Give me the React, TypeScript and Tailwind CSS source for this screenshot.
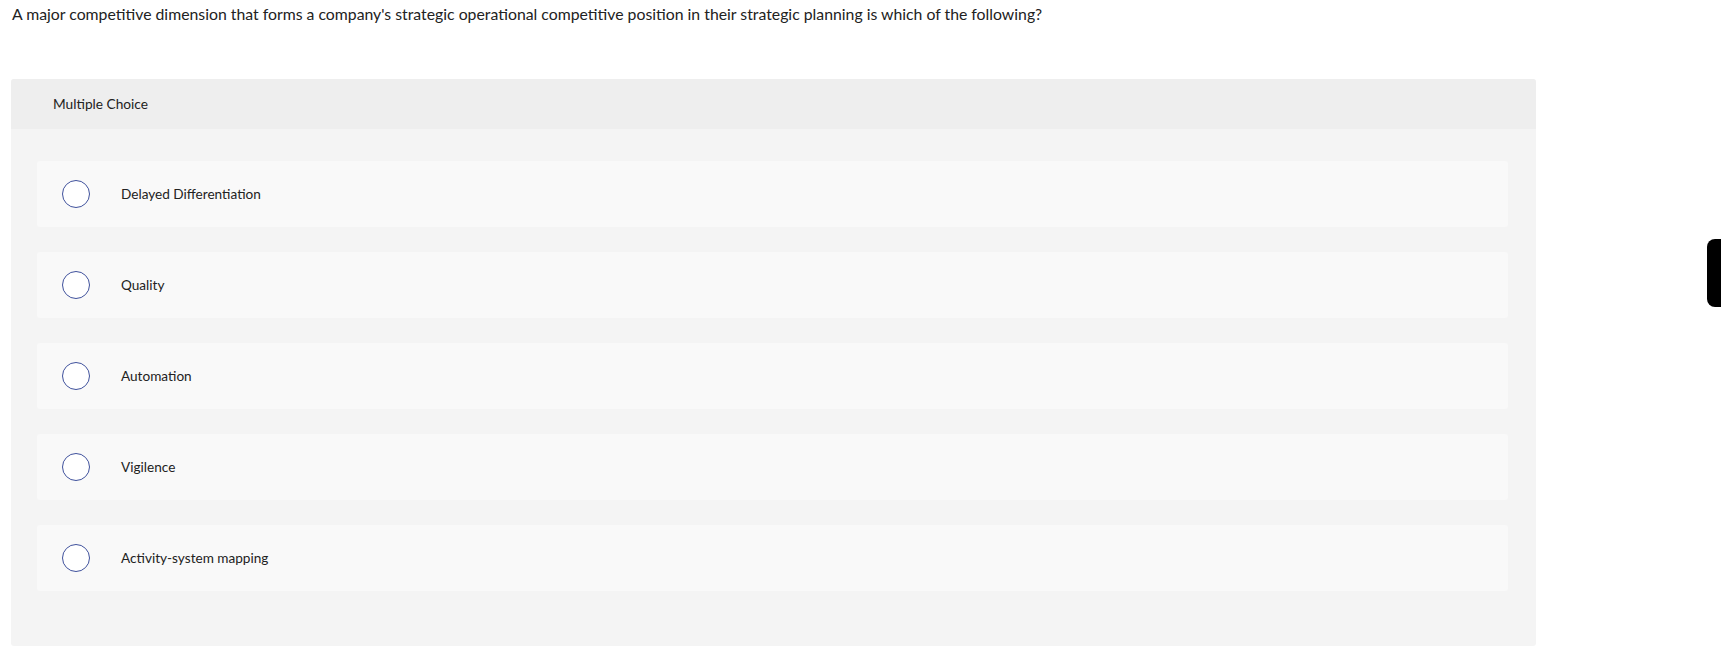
import React from "react";

const options = [
  "Delayed Differentiation",
  "Quality",
  "Automation",
  "Vigilence",
  "Activity-system mapping",
];

export default function App() {
  return (
    <div
      className="relative w-[1721px] h-[653px] bg-white text-[#222222] overflow-hidden"
      style={{ fontFamily: "Lato, 'Noto Sans', sans-serif" }}
    >
      <div className="pt-[2px] pl-[12px] text-[15.8px] leading-6 h-[29px]">
        A major competitive dimension that forms a company's strategic operational competitive position in their strategic planning is which of the following?
      </div>
      <div className="mt-[50px] ml-[11px] w-[1525px] rounded-[3px] overflow-hidden bg-[#f4f4f4]">
        <div className="h-[50px] bg-[#eeeeee] flex items-center pl-[42px] text-[13.7px]">
          Multiple Choice
        </div>
        <div className="pt-[32px] pb-[55px] pl-[26px] pr-[28px] flex flex-col gap-[25px]">
          {options.map((o) => (
            <div
              key={o}
              className="h-[66px] rounded-[3px] bg-[#f9f9f9] flex items-center"
            >
              <div className="ml-[25px] w-[28px] h-[28px] rounded-full border-[1.5px] border-[#3f519c] bg-white shrink-0" />
              <div className="ml-[31px] text-[13.6px]">{o}</div>
            </div>
          ))}
        </div>
      </div>
      <div className="absolute left-[1707px] top-[239px] w-[14px] h-[68px] bg-black rounded-l-[8px]" />
    </div>
  );
}
